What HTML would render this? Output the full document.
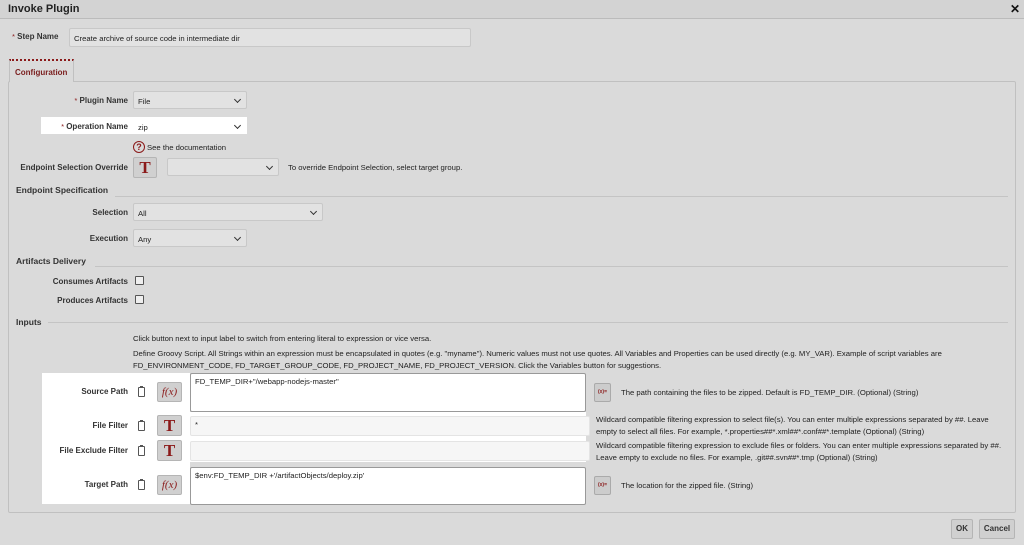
<!DOCTYPE html><html><head><style>
*{box-sizing:border-box;margin:0;padding:0}
body{width:1024px;height:545px;background:#dadada;font-family:"Liberation Sans",sans-serif;font-size:7.7px;color:#222;position:relative;overflow:hidden}
.a{position:absolute;white-space:nowrap}
.b{font-weight:bold;color:#333;font-size:8px}
.r{text-align:right}
.in{position:absolute;background:#e2e2e2;border:1px solid #c8c8c8;border-radius:2px;padding:3px 4px;font-size:7.7px}
.sel::after{content:"";position:absolute;right:6px;top:5px;width:4px;height:4px;border-right:1.5px solid #333;border-bottom:1.5px solid #333;transform:rotate(45deg)}
.btn{position:absolute;background:#d0d0d0;border:1px solid #b5b5b5;border-radius:2px;text-align:center}
.T{color:#8b1a1a;font-family:"Liberation Serif",serif;font-weight:bold;font-size:17px;line-height:19px}
.fx{color:#8b1a1a;font-family:"Liberation Serif",serif;font-style:italic;font-size:11px;line-height:18px}
.star{color:#8b1a1a}
.hd{position:absolute;left:16px;font-weight:bold;font-size:8.5px;color:#333}
.ln{position:absolute;left:16px;right:16px;height:1px;background:#c4c4c4}
.cb{position:absolute;width:9px;height:9px;border:1px solid #555;background:#eee;border-radius:1px}
.clip{position:absolute;width:7px;height:10px;border:1px solid #555;border-radius:1px}
.clip::before{content:"";position:absolute;left:1px;top:-2px;width:3px;height:2px;background:#555}
.xb{position:absolute;width:17px;height:19px;background:#ccc;border:1px solid #aaa;border-radius:2px;font-size:5px;color:#8b1a1a;text-align:center;line-height:17px;font-weight:bold}
.w{position:absolute;background:#fff}
</style></head><body>
<div class="a" style="left:0;top:0;width:1024px;height:19px;background:#d3d3d3;border-bottom:1px solid #bbb"></div>
<div class="a" style="left:8px;top:3px;font-size:11px;color:#222;font-weight:bold">Invoke Plugin</div>
<div class="a" style="left:1010px;top:2px;font-size:12px;color:#111;font-weight:bold">✕</div>
<div class="a" style="left:12px;top:32px"><span class="star">*</span> <span class="b">Step Name</span></div>
<div class="in" style="left:69px;top:28px;width:402px;height:19px;padding-top:5px">Create archive of source code in intermediate dir</div>
<div class="a" style="left:8px;top:81px;width:1008px;height:432px;border:1px solid #c0c0c0;border-radius:2px"></div>
<div class="a" style="left:9px;top:59px;width:65px;height:23px;background:#dadada;border:1px solid #c0c0c0;border-bottom:none;border-top:2px dotted #8b1a1a"></div>
<div class="a" style="left:15px;top:68px;color:#7a1d1d;font-weight:bold;font-size:8px">Configuration</div>

<div class="a r" style="left:20px;top:96px;width:108px"><span class="star">*</span> <span class="b">Plugin Name</span></div>
<div class="in sel" style="left:133px;top:91px;width:114px;height:18px;padding-top:5px">File</div>
<div class="w" style="left:41px;top:117px;width:206px;height:17px"></div>
<div class="a r" style="left:20px;top:122px;width:108px"><span class="star">*</span> <span class="b">Operation Name</span></div>
<div class="in sel" style="left:133px;top:117px;width:114px;height:17px;background:#fff;border-color:#fff;padding-top:5px">zip</div>
<div class="a" style="left:133px;top:141px;width:12px;height:12px;border:1.5px solid #8b1a1a;border-radius:50%;color:#8b1a1a;font-size:9px;font-weight:bold;text-align:center;line-height:10px">?</div>
<div class="a" style="left:147px;top:143px">See the documentation</div>
<div class="a r b" style="left:10px;top:163px;width:118px">Endpoint Selection Override</div>
<div class="btn T" style="left:133px;top:157px;width:24px;height:21px">T</div>
<div class="in sel" style="left:167px;top:158px;width:112px;height:18px"></div>
<div class="a" style="left:288px;top:163px">To override Endpoint Selection, select target group.</div>

<div class="hd" style="top:185px">Endpoint Specification</div><div class="ln" style="top:196px;left:115px"></div>
<div class="a r b" style="left:20px;top:208px;width:108px">Selection</div>
<div class="in sel" style="left:133px;top:203px;width:190px;height:18px;padding-top:5px">All</div>
<div class="a r b" style="left:20px;top:234px;width:108px">Execution</div>
<div class="in sel" style="left:133px;top:229px;width:114px;height:18px;padding-top:5px">Any</div>
<div class="hd" style="top:256px">Artifacts Delivery</div><div class="ln" style="top:266px;left:95px"></div>
<div class="a r b" style="left:20px;top:277px;width:108px">Consumes Artifacts</div>
<div class="cb" style="left:135px;top:276px"></div>
<div class="a r b" style="left:20px;top:296px;width:108px">Produces Artifacts</div>
<div class="cb" style="left:135px;top:295px"></div>
<div class="hd" style="top:317px">Inputs</div><div class="ln" style="top:322px;left:48px"></div>
<div class="a" style="left:133px;top:334px">Click button next to input label to switch from entering literal to expression or vice versa.</div>
<div class="a" style="left:133px;top:349px">Define Groovy Script. All Strings within an expression must be encapsulated in quotes (e.g. "myname"). Numeric values must not use quotes. All Variables and Properties can be used directly (e.g. MY_VAR). Example of script variables are</div>
<div class="a" style="left:133px;top:361px">FD_ENVIRONMENT_CODE, FD_TARGET_GROUP_CODE, FD_PROJECT_NAME, FD_PROJECT_VERSION. Click the Variables button for suggestions.</div>

<div class="w" style="left:42px;top:373px;width:148px;height:131px"></div>
<div class="w" style="left:186px;top:412px;width:400px;height:50px"></div>
<div class="a r b" style="left:20px;top:387px;width:108px">Source Path</div>
<div class="clip" style="left:138px;top:387px"></div>
<div class="btn fx" style="left:157px;top:382px;width:25px;height:20px">f(x)</div>
<div class="in" style="left:190px;top:373px;width:396px;height:39px;background:#fff;border-color:#999">FD_TEMP_DIR+"/webapp-nodejs-master"</div>
<div class="xb" style="left:594px;top:383px">(x)=</div>
<div class="a" style="left:621px;top:388px">The path containing the files to be zipped. Default is FD_TEMP_DIR. (Optional) (String)</div>
<div class="a r b" style="left:20px;top:421px;width:108px">File Filter</div>
<div class="clip" style="left:138px;top:421px"></div>
<div class="btn T" style="left:157px;top:415px;width:25px;height:21px">T</div>
<div class="in" style="left:190px;top:416px;width:400px;height:20px;background:#f6f6f6;border-color:#e4e4e4">*</div>
<div class="a" style="left:596px;top:415px">Wildcard compatible filtering expression to select file(s). You can enter multiple expressions separated by ##. Leave</div>
<div class="a" style="left:596px;top:427px">empty to select all files. For example, *.properties##*.xml##*.conf##*.template (Optional) (String)</div>
<div class="a r b" style="left:20px;top:446px;width:108px">File Exclude Filter</div>
<div class="clip" style="left:138px;top:446px"></div>
<div class="btn T" style="left:157px;top:440px;width:25px;height:21px">T</div>
<div class="in" style="left:190px;top:441px;width:400px;height:20px;background:#f6f6f6;border-color:#e4e4e4"></div>
<div class="a" style="left:596px;top:441px">Wildcard compatible filtering expression to exclude files or folders. You can enter multiple expressions separated by ##.</div>
<div class="a" style="left:596px;top:453px">Leave empty to exclude no files. For example, .git##.svn##*.tmp (Optional) (String)</div>
<div class="a r b" style="left:20px;top:480px;width:108px">Target Path</div>
<div class="clip" style="left:138px;top:480px"></div>
<div class="btn fx" style="left:157px;top:475px;width:25px;height:20px">f(x)</div>
<div class="in" style="left:190px;top:467px;width:396px;height:38px;background:#fff;border-color:#999">$env:FD_TEMP_DIR +'/artifactObjects/deploy.zip'</div>
<div class="xb" style="left:594px;top:476px">(x)=</div>
<div class="a" style="left:621px;top:481px">The location for the zipped file. (String)</div>

<div class="btn b" style="left:951px;top:519px;width:22px;height:20px;line-height:18px">OK</div>
<div class="btn b" style="left:979px;top:519px;width:36px;height:20px;line-height:18px">Cancel</div>
</body></html>
